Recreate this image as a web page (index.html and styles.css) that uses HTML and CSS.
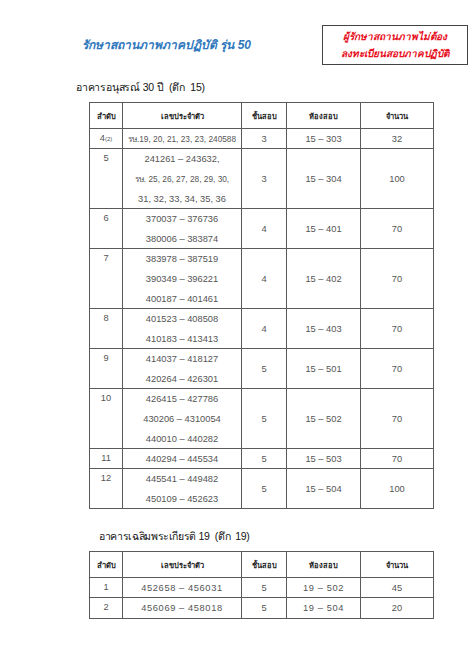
FILE: index.html
```html
<!DOCTYPE html>
<html lang="th">
<head>
<meta charset="utf-8">
<link rel="stylesheet" href="styles.css">
</head>
<body>
<div class="page">
  <div class="top">
    <div class="title">รักษาสถานภาพภาคปฏิบัติ รุ่น 50</div>
    <div class="notice">
      <div>ผู้รักษาสถานภาพไม่ต้อง</div>
      <div>ลงทะเบียนสอบภาคปฏิบัติ</div>
    </div>
  </div>

  <h2 class="heading h-first">อาคารอนุสรณ์ 30 ปี&nbsp; (ตึก&nbsp; 15)</h2>
  <div class="tbl tbl-a">
    <div class="th">ลำดับ</div><div class="th">เลขประจำตัว</div><div class="th">ชั้นสอบ</div><div class="th">ห้องสอบ</div><div class="th">จำนวน</div>

    <div class="no">4<span class="sm">(2)</span></div>
    <div class="td"><div class="th-line">รษ.19, 20, 21, 23, 23, 240588</div></div>
    <div class="td">3</div><div class="td">15 – 303</div><div class="td">32</div>

    <div class="no">5</div>
    <div class="td"><div>241261 – 243632,</div><div class="th-line">รษ. 25, 26, 27, 28, 29, 30,</div><div>31, 32, 33, 34, 35, 36</div></div>
    <div class="td">3</div><div class="td">15 – 304</div><div class="td">100</div>

    <div class="no">6</div>
    <div class="td"><div>370037 – 376736</div><div>380006 – 383874</div></div>
    <div class="td">4</div><div class="td">15 – 401</div><div class="td">70</div>

    <div class="no">7</div>
    <div class="td"><div>383978 – 387519</div><div>390349 – 396221</div><div>400187 – 401461</div></div>
    <div class="td">4</div><div class="td">15 – 402</div><div class="td">70</div>

    <div class="no">8</div>
    <div class="td"><div>401523 – 408508</div><div>410183 – 413413</div></div>
    <div class="td">4</div><div class="td">15 – 403</div><div class="td">70</div>

    <div class="no">9</div>
    <div class="td"><div>414037 – 418127</div><div>420264 – 426301</div></div>
    <div class="td">5</div><div class="td">15 – 501</div><div class="td">70</div>

    <div class="no">10</div>
    <div class="td"><div>426415 – 427786</div><div>430206 – 4310054</div><div>440010 – 440282</div></div>
    <div class="td">5</div><div class="td">15 – 502</div><div class="td">70</div>

    <div class="no">11</div>
    <div class="td"><div>440294 – 445534</div></div>
    <div class="td">5</div><div class="td">15 – 503</div><div class="td">70</div>

    <div class="no">12</div>
    <div class="td"><div>445541 – 449482</div><div>450109 – 452623</div></div>
    <div class="td">5</div><div class="td">15 – 504</div><div class="td">100</div>
  </div>

  <h2 class="heading h-second">อาคารเฉลิมพระเกียรติ 19&nbsp; (ตึก&nbsp; 19)</h2>
  <div class="tbl tbl-b">
    <div class="th">ลำดับ</div><div class="th">เลขประจำตัว</div><div class="th">ชั้นสอบ</div><div class="th">ห้องสอบ</div><div class="th">จำนวน</div>

    <div class="no">1</div>
    <div class="td wide">452658 – 456031</div>
    <div class="td">5</div><div class="td wide">19 – 502</div><div class="td">45</div>

    <div class="no">2</div>
    <div class="td wide">456069 – 458018</div>
    <div class="td">5</div><div class="td wide">19 – 504</div><div class="td">20</div>
  </div>
</div>
</body>
</html>
```

FILE: styles.css
```css
html, body {
  margin: 0;
  padding: 0;
  background: #ffffff;
}

body {
  font-family: "Liberation Sans", "Noto Sans", "DejaVu Sans", sans-serif;
  color: #555555;
}

.page {
  width: 474px;
  padding-top: 25px;
}

.top {
  display: flex;
  align-items: center;
  height: 40px;
}

.title {
  margin-left: 82px;
  margin-top: -2px;
  font-size: 12px;
  font-weight: bold;
  font-style: italic;
  color: #2f78bd;
}

.notice {
  margin-left: auto;
  margin-right: 6px;
  width: 144px;
  height: 38px;
  border: 1px solid #444444;
  display: flex;
  flex-direction: column;
  justify-content: center;
  align-items: center;
  color: #e8101e;
  font-size: 10px;
  font-weight: bold;
  font-style: italic;
  line-height: 17px;
}

.heading {
  margin: 0;
  font-size: 10.5px;
  font-weight: normal;
  line-height: 20px;
  letter-spacing: -0.2px;
  color: #151515;
}

.h-first {
  margin-top: 12px;
  margin-left: 76px;
}

.h-second {
  margin-top: 17px;
  margin-left: 99px;
  letter-spacing: -0.35px;
}

.tbl {
  display: grid;
  grid-template-columns: 32px 118px 44px 73px 72px;
  gap: 1px;
  background: #5a5a5a;
  border: 1px solid #5a5a5a;
  width: max-content;
  margin-left: 89px;
  margin-top: 5px;
  font-size: 9.3px;
}

.tbl-a {
  grid-template-rows: 25px 19px 59px 39px 59px 39px 39px 59px 19px 39px;
}

.tbl-b {
  grid-template-rows: 25px 19px 20px;
}

.tbl > div {
  background: #ffffff;
  text-align: center;
}

.th {
  display: flex;
  align-items: center;
  justify-content: center;
  font-size: 7.5px;
  font-weight: bold;
  color: #222222;
}

.td {
  display: flex;
  flex-direction: column;
  align-items: center;
  justify-content: center;
  line-height: 20px;
}

.no {
  line-height: 19px;
}

.sm {
  font-size: 6px;
}

.th-line {
  font-size: 8.3px;
}

.wide {
  letter-spacing: 0.6px;
}
```
